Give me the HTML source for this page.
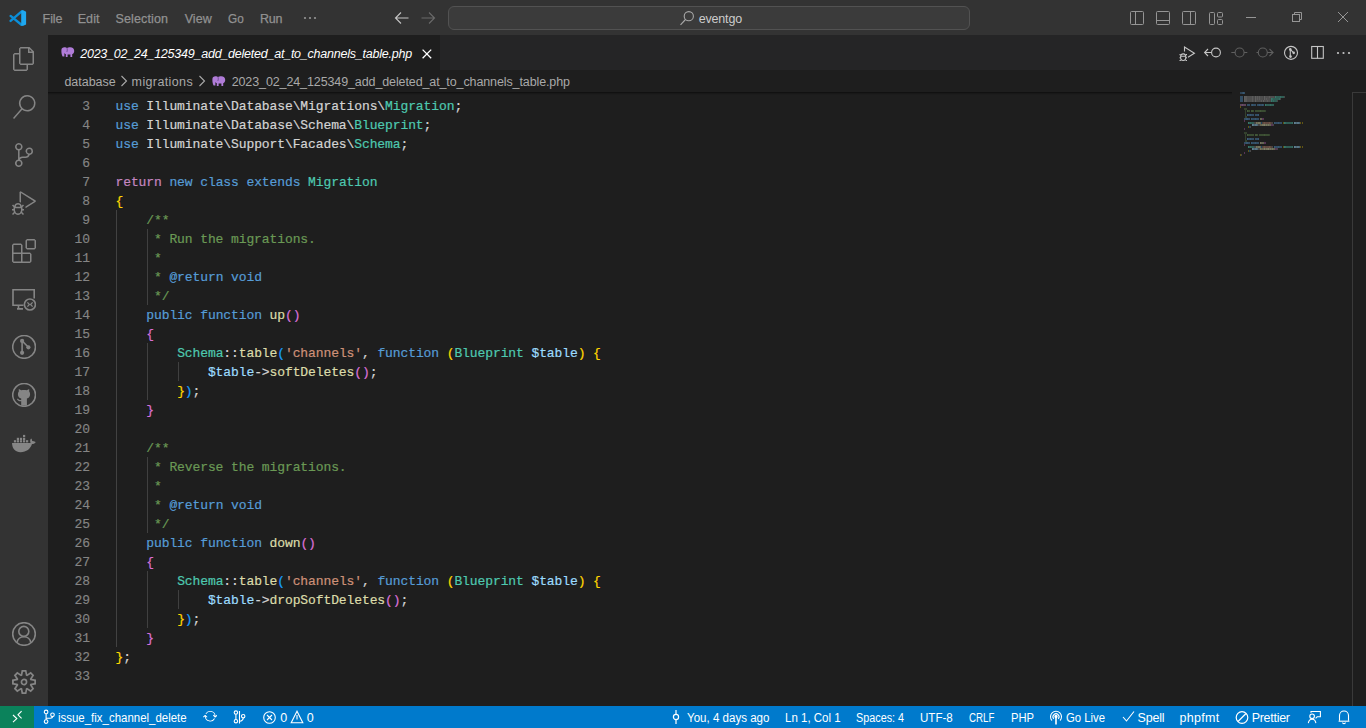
<!DOCTYPE html>
<html><head><meta charset="utf-8"><style>
*{margin:0;padding:0;box-sizing:border-box}
svg{display:block}
html,body{width:1366px;height:728px;overflow:hidden;background:#1e1e1e}
body{position:relative;font-family:"Liberation Sans",sans-serif}
.mi{position:absolute;top:11px;font-size:12.5px;line-height:16px;color:#9a9a9a;white-space:pre}
.si{position:absolute;top:709px;font-size:11.5px;line-height:16px;color:#ffffff;white-space:pre}
.ln{position:absolute;left:48px;width:42px;height:19px;line-height:19px;text-align:right;color:#858585;font-family:"Liberation Mono",monospace;font-size:13px;letter-spacing:-0.1px;-webkit-text-stroke:0.15px currentColor}
.cl{position:absolute;left:115.5px;height:19px;line-height:19px;white-space:pre;font-family:"Liberation Mono",monospace;font-size:13px;letter-spacing:-0.1px;color:#d4d4d4;-webkit-text-stroke:0.2px currentColor}
</style></head><body>
<div style="position:absolute;left:0;top:0;width:1366px;height:35px;background:#333333"></div>
<svg style="position:absolute;left:6px;top:6px" width="24" height="24" viewBox="0 0 24 24"><path d="M4.6 9.9L15.4 18.8M4.6 14.9L15.4 5.6" stroke="#0b8ed8" stroke-width="2.4" stroke-linecap="round"/><path d="M15.2 4.8L16.8 4L20.1 5.7V18.4L16.8 20.1L15.2 19.3Z" fill="#1fa8f0"/></svg>
<div style="position:absolute;left:42.60px;top:9px;font-size:12.5px;line-height:20px;color:#959595;white-space:pre;font-family:'Liberation Sans';letter-spacing:-0.100px;-webkit-text-stroke:0.25px #8a8a8a;">File</div>
<div style="position:absolute;left:77.70px;top:9px;font-size:12.5px;line-height:20px;color:#959595;white-space:pre;font-family:'Liberation Sans';letter-spacing:0.100px;-webkit-text-stroke:0.25px #8a8a8a;">Edit</div>
<div style="position:absolute;left:115.50px;top:9px;font-size:12.5px;line-height:20px;color:#959595;white-space:pre;font-family:'Liberation Sans';letter-spacing:0.137px;-webkit-text-stroke:0.25px #8a8a8a;">Selection</div>
<div style="position:absolute;left:184.70px;top:9px;font-size:12.5px;line-height:20px;color:#959595;white-space:pre;font-family:'Liberation Sans';letter-spacing:0.067px;-webkit-text-stroke:0.25px #8a8a8a;">View</div>
<div style="position:absolute;left:228.00px;top:9px;font-size:12.5px;line-height:20px;color:#959595;white-space:pre;font-family:'Liberation Sans';letter-spacing:0.000px;transform:scaleX(0.9412);transform-origin:0 0;-webkit-text-stroke:0.25px #8a8a8a;">Go</div>
<div style="position:absolute;left:260.00px;top:9px;font-size:12.5px;line-height:20px;color:#959595;white-space:pre;font-family:'Liberation Sans';letter-spacing:-0.300px;-webkit-text-stroke:0.25px #8a8a8a;">Run</div>
<svg style="position:absolute;left:302px;top:16px" width="16" height="4"><circle cx="3" cy="2" r="1.1" fill="#959595"/><circle cx="8" cy="2" r="1.1" fill="#959595"/><circle cx="13" cy="2" r="1.1" fill="#959595"/></svg>
<svg style="position:absolute;left:394px;top:11px" width="16" height="14" viewBox="0 0 16 14" fill="none" stroke="#c5c5c5" stroke-width="1.1"><path d="M1.5 7h13M7 1.5L1.5 7 7 12.5"/></svg>
<svg style="position:absolute;left:420px;top:11px" width="16" height="14" viewBox="0 0 16 14" fill="none" stroke="#6a6a6a" stroke-width="1.1"><path d="M1.5 7h13M9 1.5L14.5 7 9 12.5"/></svg>
<div style="position:absolute;left:448px;top:6px;width:522px;height:24px;border:1px solid #525252;border-radius:6px;background:#3b3b3b"></div>
<svg style="position:absolute;left:679px;top:10px" width="16" height="16" viewBox="0 0 16 16" fill="none" stroke="#a8a8a8" stroke-width="1.1"><circle cx="9.8" cy="6.2" r="4.6"/><path d="M6.5 9.5L1.5 14.8"/></svg>
<div style="position:absolute;left:698.80px;top:9px;font-size:12.5px;line-height:20px;color:#cccccc;white-space:pre;font-family:'Liberation Sans';letter-spacing:-0.200px;">eventgo</div>
<svg style="position:absolute;left:1129px;top:10px" width="100" height="16" fill="none" stroke="#959595" stroke-width="1"><rect x="1.5" y="1.5" width="13" height="13" rx="1"/><path d="M6.5 1.5v13"/><rect x="27.5" y="1.5" width="13" height="13" rx="1"/><path d="M27.5 10.5h13"/><rect x="53.5" y="1.5" width="13" height="13" rx="1"/><path d="M61.5 1.5v13"/><rect x="80.5" y="2.5" width="5" height="12" rx="1"/><rect x="88.5" y="2.5" width="5" height="4.5" rx="1"/><rect x="88.5" y="9.5" width="5" height="5" rx="1"/></svg>
<svg style="position:absolute;left:1244px;top:8px" width="110" height="18" fill="none" stroke="#959595" stroke-width="1"><path d="M2 9.5h10"/><rect x="48.5" y="6.5" width="7" height="7"/><path d="M50.5 6.5v-2h7v7h-2"/><path d="M94 4l10 10M104 4l-10 10"/></svg>
<div style="position:absolute;left:0;top:35px;width:48px;height:671px;background:#333333"></div>
<div style="position:absolute;left:12px;top:47px;width:24px;height:24px"><svg width="24" height="24" viewBox="0 0 24 24"><path fill="#858585" d="M17.5 0h-9L7 1.5V6H2.5L1 7.5v15.07L2.5 24h12.07L16 22.57V18h4.7l1.3-1.43V4.5L17.5 0zm0 2.12l2.38 2.38H17.5V2.12zm-3 20.38h-12v-15H7v9.07L8.5 18h6v4.5zm6-6h-12v-15H16V6h4.5v10.5z"/></svg></div>
<div style="position:absolute;left:12px;top:95px;width:24px;height:24px"><svg width="24" height="24" viewBox="0 0 24 24"><path fill="#858585" d="M15.25 0a8.25 8.25 0 0 0-6.18 13.72L1 22.88l1.12 1 8.05-9.12A8.251 8.251 0 1 0 15.25.01V0zm0 15a6.75 6.75 0 1 1 0-13.5 6.75 6.75 0 0 1 0 13.5z"/></svg></div>
<div style="position:absolute;left:12px;top:143px;width:24px;height:24px"><svg width="24" height="24" viewBox="0 0 24 24"><path fill="#858585" d="M21.007 8.222A3.738 3.738 0 0 0 15.045 5.2a3.737 3.737 0 0 0 1.156 6.583 2.988 2.988 0 0 1-2.668 1.67h-2.99a4.456 4.456 0 0 0-2.989 1.165V7.4a3.737 3.737 0 1 0-1.494 0v9.117a3.776 3.776 0 1 0 1.816.099 2.99 2.99 0 0 1 2.668-1.667h2.99a4.484 4.484 0 0 0 4.223-3.039 3.736 3.736 0 0 0 3.25-3.687zM4.565 3.738a2.242 2.242 0 1 1 4.484 0 2.242 2.242 0 0 1-4.484 0zm4.484 16.441a2.242 2.242 0 1 1-4.484 0 2.242 2.242 0 0 1 4.484 0zm8.221-9.715a2.242 2.242 0 1 1 0-4.485 2.242 2.242 0 0 1 0 4.485z"/></svg></div>
<div style="position:absolute;left:12px;top:191px;width:24px;height:24px"><svg width="24" height="24" viewBox="0 0 24 24"><path fill="#858585" fill-rule="evenodd" d="M10.94 13.5l-1.32 1.32a3.73 3.73 0 0 0-7.24 0L1.06 13.5 0 14.56l1.72 1.72-.22.22V18H0v1.5h1.5v.08c.077.489.214.966.41 1.42L0 22.94 1.06 24l1.650-1.65A4.308 4.308 0 0 0 6 24a4.31 4.31 0 0 0 3.29-1.65L10.94 24 12 22.94 10.09 21c.198-.464.336-.951.41-1.45v-.1H12V18h-1.5v-1.5l-.22-.22L12 14.560l-1.06-1.06zM6 13.5a2.25 2.25 0 0 1 2.25 2.25h-4.5A2.25 2.25 0 0 1 6 13.5zm3 6a3.33 3.33 0 0 1-3 3 3.33 3.33 0 0 1-3-3v-2.25h6v2.25zm14.76-9.9v1.26L13.5 17.37v-1.75l8.45-5.4L9 2v9.75a5.1 5.1 0 0 0-1.5-.91V.94L8.650.3l15.11 9.3z"/></svg></div>
<div style="position:absolute;left:12px;top:239px;width:24px;height:24px"><svg width="24" height="24" viewBox="0 0 24 24"><path fill="#858585" fill-rule="evenodd" d="M13.5 1.5L15 0h7.5L24 1.5V9l-1.5 1.5H15L13.5 9V1.5zm1.5 0V9h7.5V1.5H15zM0 15V6l1.5-1.5H9L10.5 6v7.5H18l1.5 1.5v7.5L18 24H1.5L0 22.5V15zm9-1.5V6H1.5v7.5H9zM9 15H1.5v7.5H9V15zm1.5 7.5H18V15h-7.5v7.5z"/></svg></div>
<div style="position:absolute;left:12px;top:287px;width:24px;height:24px"><svg width="24" height="24" viewBox="0 0 24 24" fill="none" stroke="#858585" stroke-width="1.6"><path d="M11.5 18.3H1V2.7h21.2V11.5"/><path d="M5 21.9h6M6.5 18.3v3"/><circle cx="17.9" cy="17.5" r="5.5"/><path d="M15.4 15.4l2 2.1-2 2.1M20.6 15.4l-2 2.1 2 2.1" stroke-width="1.3"/></svg></div>
<div style="position:absolute;left:12px;top:335px;width:24px;height:24px"><svg width="24" height="24" viewBox="0 0 24 24" fill="none" stroke="#858585" stroke-width="1.6"><circle cx="12.1" cy="11.9" r="11.4"/><path d="M10.1 5.9v11.9M10.1 5.9l6.3 6.4"/><circle cx="10.1" cy="5.9" r="2.1" fill="#858585" stroke="none"/><circle cx="16.4" cy="12.3" r="2.1" fill="#858585" stroke="none"/><circle cx="10.1" cy="17.8" r="2.1" fill="#858585" stroke="none"/></svg></div>
<div style="position:absolute;left:12px;top:383px;width:24px;height:24px"><svg width="24" height="24" viewBox="0 0 24 24"><circle cx="12.1" cy="11.9" r="11.4" fill="none" stroke="#858585" stroke-width="1.6"/><path fill="#858585" d="M9.2 22.5V18.2C7.6 18.4 6.5 17.8 5.8 17.2L4.9 16.3L5.8 15.6L6.8 16.4C7.6 17 8.3 17.1 9.2 16.9V15.6C7 15 5.9 13.5 5.9 11.2C5.9 10.2 6.2 9.3 6.8 8.6V5.9L9.3 7.2C10.1 7 11 6.9 12 6.9C13 6.9 13.9 7 14.7 7.2L17.2 5.9V8.6C17.8 9.3 18.1 10.2 18.1 11.2C18.1 13.5 17 15 14.9 15.6V22.5Z"/></svg></div>
<div style="position:absolute;left:12px;top:431px;width:24px;height:24px"><svg width="24" height="24" viewBox="0 0 24 24"><path fill="#858585" d="M0 12H18.6L18.2 10.5C18 9.3 18.4 8 19.2 7.4C19.9 8 20.3 9 20.1 9.9C21.2 9.9 22.3 10.2 23.7 10.9C23 12.2 21.7 13 20 13C18.4 17.8 14.5 21.2 8.5 21.2C3.5 21.2 0.2 18 0 12Z"/><rect x="1.9" y="9.2" width="2.2" height="2.2" fill="#858585"/><rect x="4.8" y="9.2" width="2.2" height="2.2" fill="#858585"/><rect x="7.9" y="9.2" width="2.2" height="2.2" fill="#858585"/><rect x="11" y="9.2" width="2.2" height="2.2" fill="#858585"/><rect x="14" y="9.2" width="2.2" height="2.2" fill="#858585"/><rect x="4.8" y="6.8" width="2.2" height="2.2" fill="#858585"/><rect x="7.9" y="6.8" width="2.2" height="2.2" fill="#858585"/><rect x="11" y="6.8" width="2.2" height="2.2" fill="#858585"/><rect x="11" y="3.9" width="2.2" height="2.2" fill="#858585"/></svg></div>
<div style="position:absolute;left:12px;top:622px;width:24px;height:24px"><svg width="24" height="24" viewBox="0 0 24 24" fill="none" stroke="#858585" stroke-width="1.6"><circle cx="12" cy="12" r="11.3"/><circle cx="11.8" cy="9.4" r="5"/><path d="M5 20.5C5.6 17.2 8.4 14.8 11.9 14.8C15.4 14.8 18.2 17.2 18.8 20.5"/></svg></div>
<div style="position:absolute;left:12px;top:670px;width:24px;height:24px"><svg width="24" height="24" viewBox="0 0 24 24"><path fill="#858585" fill-rule="evenodd" d="M19.85 8.75l4.15.83v4.84l-4.15.83 2.35 3.52-3.43 3.43-3.52-2.35-.83 4.15H9.58l-.83-4.15-3.52 2.35-3.43-3.43 2.350-3.52L0 14.42V9.58l4.15-.83L1.8 5.23 5.23 1.8l3.52 2.35L9.58 0h4.84l.83 4.15 3.52-2.35 3.43 3.43-2.35 3.52zm-1.57 5.07l4-.81v-2l-4-.81-.54-1.3 2.29-3.43-1.43-1.43-3.43 2.29-1.3-.54-.81-4h-2l-.81 4-1.3.54-3.43-2.29-1.43 1.43L6.38 8.9l-.54 1.3-4 .81v2l4 .81.54 1.3-2.29 3.43 1.43 1.43 3.43-2.29 1.3.54.81 4h2l.81-4 1.3-.54 3.43 2.29 1.43-1.43-2.29-3.43.54-1.3zm-8.186-4.672A3.430 3.430 0 0 1 12 8.57 3.44 3.44 0 0 1 15.43 12a3.43 3.43 0 1 1-5.336-2.852zm.956 4.274c.281.188.612.288.95.288A1.7 1.7 0 0 0 13.71 12a1.71 1.71 0 1 0-2.66 1.422z"/></svg></div>
<div style="position:absolute;left:48px;top:35px;width:1318px;height:35px;background:#252526"></div>
<div style="position:absolute;left:48px;top:35px;width:392px;height:35px;background:#1e1e1e"></div>
<div style="position:absolute;left:61px;top:47px"><svg style="display:block" width="14" height="11" viewBox="0 0 14 11"><path fill="#b07cd8" d="M0.4 3C0.4 1.2 1.8 0.2 3.4 0.2C4.6 0.2 5.5 0.6 6 1.1C6.7 0.5 7.8 0.3 9.2 0.3C11.8 0.3 13.2 1.9 13.2 4.1C13.2 5.7 12.5 6.7 11.2 7.2V9.9H9.4V7.6H6.6V9.9H4.8V7.2C4.2 7 3.7 6.5 3.4 6V9.6H1.6C1 8.2 0.4 6.5 0.4 4.5Z"/><path d="M6 1.1C6.4 2.2 6.4 3.8 5.8 5" stroke="#5a3f78" stroke-width="0.7" fill="none"/></svg></div>
<div style="position:absolute;left:80.20px;top:44px;font-size:12.5px;line-height:20px;color:#ffffff;white-space:pre;font-family:'Liberation Sans';letter-spacing:-0.230px;font-style:italic;">2023_02_24_125349_add_deleted_at_to_channels_table.php</div>
<svg style="position:absolute;left:421px;top:48px" width="12" height="12" fill="none" stroke="#ffffff" stroke-width="1.3"><path d="M1.6 1.6l8.6 8.6M10.2 1.6l-8.6 8.6"/></svg>
<svg style="position:absolute;left:1170px;top:40px" width="190" height="26" fill="none" stroke-width="1.1"><path d="M14.5 11.6V7L24.4 13.2 18 17.2" stroke="#c5c5c5"/><ellipse cx="13.2" cy="17.2" rx="2.6" ry="3.3" stroke="#c5c5c5"/><path d="M10.6 16.2h5.2M9.5 14.6h1.2M15.6 14.6h1.4M9.5 17.8h1.2M15.6 17.8h1.4M9.5 20.5h1.4M15.6 20.5h1.4" stroke="#c5c5c5"/><circle cx="46" cy="12.5" r="4.4" stroke="#c5c5c5"/><path d="M41.6 12.5h-7M38 9l-3.4 3.5L38 16" stroke="#c5c5c5"/><circle cx="69.6" cy="12.5" r="4.5" stroke="#5f5f5f"/><path d="M61.3 12.5h3.8M74.1 12.5h3.2" stroke="#5f5f5f"/><circle cx="92.8" cy="12.5" r="4.5" stroke="#5f5f5f"/><path d="M86.5 12.5h1.8M97.3 12.5h6M99.5 9l3.6 3.5-3.6 3.5" stroke="#5f5f5f"/><circle cx="121" cy="12.85" r="6.5" stroke="#c5c5c5"/><path d="M120.3 9.4v7.2M120.3 9.4l3.4 3.45" stroke="#c5c5c5"/><circle cx="120.3" cy="9.4" r="1.3" fill="#c5c5c5"/><circle cx="123.7" cy="12.85" r="1.3" fill="#c5c5c5"/><circle cx="120.5" cy="16.6" r="1.3" fill="#c5c5c5"/><rect x="141.7" y="6.5" width="11.6" height="11.8" stroke="#c5c5c5"/><path d="M147.5 6.5v11.8" stroke="#c5c5c5"/></svg>
<svg style="position:absolute;left:1336px;top:51px" width="16" height="4"><circle cx="2" cy="2" r="1.1" fill="#c5c5c5"/><circle cx="7.5" cy="2" r="1.1" fill="#c5c5c5"/><circle cx="13" cy="2" r="1.1" fill="#c5c5c5"/></svg>
<div style="position:absolute;left:64.40px;top:72px;font-size:12.5px;line-height:20px;color:#a9a9a9;white-space:pre;font-family:'Liberation Sans';letter-spacing:-0.014px;">database</div>
<svg style="position:absolute;left:120px;top:75px" width="8" height="12" fill="none" stroke="#a9a9a9" stroke-width="1.1"><path d="M1.5 1l5 5-5 5"/></svg>
<div style="position:absolute;left:131.60px;top:72px;font-size:12.5px;line-height:20px;color:#a9a9a9;white-space:pre;font-family:'Liberation Sans';letter-spacing:0.378px;">migrations</div>
<svg style="position:absolute;left:198px;top:75px" width="8" height="12" fill="none" stroke="#a9a9a9" stroke-width="1.1"><path d="M1.5 1l5 5-5 5"/></svg>
<div style="position:absolute;left:212px;top:76px"><svg style="display:block" width="14" height="11" viewBox="0 0 14 11"><path fill="#b07cd8" d="M0.4 3C0.4 1.2 1.8 0.2 3.4 0.2C4.6 0.2 5.5 0.6 6 1.1C6.7 0.5 7.8 0.3 9.2 0.3C11.8 0.3 13.2 1.9 13.2 4.1C13.2 5.7 12.5 6.7 11.2 7.2V9.9H9.4V7.6H6.6V9.9H4.8V7.2C4.2 7 3.7 6.5 3.4 6V9.6H1.6C1 8.2 0.4 6.5 0.4 4.5Z"/><path d="M6 1.1C6.4 2.2 6.4 3.8 5.8 5" stroke="#5a3f78" stroke-width="0.7" fill="none"/></svg></div>
<div style="position:absolute;left:231.70px;top:72px;font-size:12.5px;line-height:20px;color:#a9a9a9;white-space:pre;font-family:'Liberation Sans';letter-spacing:-0.109px;">2023_02_24_125349_add_deleted_at_to_channels_table.php</div>
<div style="position:absolute;left:48px;top:92px;width:1184px;height:1px;background:#111111"></div><div style="position:absolute;left:48px;top:93px;width:1184px;height:1px;background:#181818"></div><div style="position:absolute;left:48px;top:94px;width:1184px;height:1px;background:#1c1c1c"></div>
<div style="position:absolute;left:116px;top:210px;width:1px;height:437px;background:#424242"></div>
<div style="position:absolute;left:147px;top:229px;width:1px;height:76px;background:#404040"></div>
<div style="position:absolute;left:147px;top:343px;width:1px;height:57px;background:#404040"></div>
<div style="position:absolute;left:178px;top:362px;width:1px;height:19px;background:#404040"></div>
<div style="position:absolute;left:147px;top:457px;width:1px;height:76px;background:#404040"></div>
<div style="position:absolute;left:147px;top:571px;width:1px;height:57px;background:#404040"></div>
<div style="position:absolute;left:178px;top:590px;width:1px;height:19px;background:#404040"></div>
<div class="ln" style="top:97px">3</div>
<div class="ln" style="top:116px">4</div>
<div class="ln" style="top:135px">5</div>
<div class="ln" style="top:154px">6</div>
<div class="ln" style="top:173px">7</div>
<div class="ln" style="top:192px">8</div>
<div class="ln" style="top:211px">9</div>
<div class="ln" style="top:230px">10</div>
<div class="ln" style="top:249px">11</div>
<div class="ln" style="top:268px">12</div>
<div class="ln" style="top:287px">13</div>
<div class="ln" style="top:306px">14</div>
<div class="ln" style="top:325px">15</div>
<div class="ln" style="top:344px">16</div>
<div class="ln" style="top:363px">17</div>
<div class="ln" style="top:382px">18</div>
<div class="ln" style="top:401px">19</div>
<div class="ln" style="top:420px">20</div>
<div class="ln" style="top:439px">21</div>
<div class="ln" style="top:458px">22</div>
<div class="ln" style="top:477px">23</div>
<div class="ln" style="top:496px">24</div>
<div class="ln" style="top:515px">25</div>
<div class="ln" style="top:534px">26</div>
<div class="ln" style="top:553px">27</div>
<div class="ln" style="top:572px">28</div>
<div class="ln" style="top:591px">29</div>
<div class="ln" style="top:610px">30</div>
<div class="ln" style="top:629px">31</div>
<div class="ln" style="top:648px">32</div>
<div class="ln" style="top:667px">33</div>
<div class="cl" style="top:97px"><span style="color:#569cd6">use</span><span style="color:#d4d4d4"> Illuminate\Database\Migrations\</span><span style="color:#4ec9b0">Migration</span><span style="color:#d4d4d4">;</span></div>
<div class="cl" style="top:116px"><span style="color:#569cd6">use</span><span style="color:#d4d4d4"> Illuminate\Database\Schema\</span><span style="color:#4ec9b0">Blueprint</span><span style="color:#d4d4d4">;</span></div>
<div class="cl" style="top:135px"><span style="color:#569cd6">use</span><span style="color:#d4d4d4"> Illuminate\Support\Facades\</span><span style="color:#4ec9b0">Schema</span><span style="color:#d4d4d4">;</span></div>
<div class="cl" style="top:154px"></div>
<div class="cl" style="top:173px"><span style="color:#c586c0">return</span><span style="color:#d4d4d4"> </span><span style="color:#569cd6">new</span><span style="color:#d4d4d4"> </span><span style="color:#569cd6">class</span><span style="color:#d4d4d4"> </span><span style="color:#569cd6">extends</span><span style="color:#d4d4d4"> </span><span style="color:#4ec9b0">Migration</span></div>
<div class="cl" style="top:192px"><span style="color:#ffd700">{</span></div>
<div class="cl" style="top:211px"><span style="color:#6a9955">    /**</span></div>
<div class="cl" style="top:230px"><span style="color:#6a9955">     * Run the migrations.</span></div>
<div class="cl" style="top:249px"><span style="color:#6a9955">     *</span></div>
<div class="cl" style="top:268px"><span style="color:#6a9955">     * </span><span style="color:#569cd6">@return</span><span style="color:#6a9955"> </span><span style="color:#569cd6">void</span></div>
<div class="cl" style="top:287px"><span style="color:#6a9955">     */</span></div>
<div class="cl" style="top:306px"><span style="color:#d4d4d4">    </span><span style="color:#569cd6">public</span><span style="color:#d4d4d4"> </span><span style="color:#569cd6">function</span><span style="color:#d4d4d4"> </span><span style="color:#dcdcaa">up</span><span style="color:#da70d6">()</span></div>
<div class="cl" style="top:325px"><span style="color:#d4d4d4">    </span><span style="color:#da70d6">{</span></div>
<div class="cl" style="top:344px"><span style="color:#d4d4d4">        </span><span style="color:#4ec9b0">Schema</span><span style="color:#d4d4d4">::</span><span style="color:#dcdcaa">table</span><span style="color:#179fff">(</span><span style="color:#ce9178">&#x27;channels&#x27;</span><span style="color:#d4d4d4">, </span><span style="color:#569cd6">function</span><span style="color:#d4d4d4"> </span><span style="color:#ffd700">(</span><span style="color:#4ec9b0">Blueprint</span><span style="color:#d4d4d4"> </span><span style="color:#9cdcfe">$table</span><span style="color:#ffd700">)</span><span style="color:#d4d4d4"> </span><span style="color:#ffd700">{</span></div>
<div class="cl" style="top:363px"><span style="color:#d4d4d4">            </span><span style="color:#9cdcfe">$table</span><span style="color:#d4d4d4">-&gt;</span><span style="color:#dcdcaa">softDeletes</span><span style="color:#da70d6">()</span><span style="color:#d4d4d4">;</span></div>
<div class="cl" style="top:382px"><span style="color:#d4d4d4">        </span><span style="color:#ffd700">}</span><span style="color:#179fff">)</span><span style="color:#d4d4d4">;</span></div>
<div class="cl" style="top:401px"><span style="color:#d4d4d4">    </span><span style="color:#da70d6">}</span></div>
<div class="cl" style="top:420px"></div>
<div class="cl" style="top:439px"><span style="color:#6a9955">    /**</span></div>
<div class="cl" style="top:458px"><span style="color:#6a9955">     * Reverse the migrations.</span></div>
<div class="cl" style="top:477px"><span style="color:#6a9955">     *</span></div>
<div class="cl" style="top:496px"><span style="color:#6a9955">     * </span><span style="color:#569cd6">@return</span><span style="color:#6a9955"> </span><span style="color:#569cd6">void</span></div>
<div class="cl" style="top:515px"><span style="color:#6a9955">     */</span></div>
<div class="cl" style="top:534px"><span style="color:#d4d4d4">    </span><span style="color:#569cd6">public</span><span style="color:#d4d4d4"> </span><span style="color:#569cd6">function</span><span style="color:#d4d4d4"> </span><span style="color:#dcdcaa">down</span><span style="color:#da70d6">()</span></div>
<div class="cl" style="top:553px"><span style="color:#d4d4d4">    </span><span style="color:#da70d6">{</span></div>
<div class="cl" style="top:572px"><span style="color:#d4d4d4">        </span><span style="color:#4ec9b0">Schema</span><span style="color:#d4d4d4">::</span><span style="color:#dcdcaa">table</span><span style="color:#179fff">(</span><span style="color:#ce9178">&#x27;channels&#x27;</span><span style="color:#d4d4d4">, </span><span style="color:#569cd6">function</span><span style="color:#d4d4d4"> </span><span style="color:#ffd700">(</span><span style="color:#4ec9b0">Blueprint</span><span style="color:#d4d4d4"> </span><span style="color:#9cdcfe">$table</span><span style="color:#ffd700">)</span><span style="color:#d4d4d4"> </span><span style="color:#ffd700">{</span></div>
<div class="cl" style="top:591px"><span style="color:#d4d4d4">            </span><span style="color:#9cdcfe">$table</span><span style="color:#d4d4d4">-&gt;</span><span style="color:#dcdcaa">dropSoftDeletes</span><span style="color:#da70d6">()</span><span style="color:#d4d4d4">;</span></div>
<div class="cl" style="top:610px"><span style="color:#d4d4d4">        </span><span style="color:#ffd700">}</span><span style="color:#179fff">)</span><span style="color:#d4d4d4">;</span></div>
<div class="cl" style="top:629px"><span style="color:#d4d4d4">    </span><span style="color:#da70d6">}</span></div>
<div class="cl" style="top:648px"><span style="color:#ffd700">}</span><span style="color:#d4d4d4">;</span></div>
<div class="cl" style="top:667px"></div>
<div style="position:absolute;left:1240px;top:92px;width:2px;height:2px;background:#569cd6;opacity:0.30"></div>
<div style="position:absolute;left:1242px;top:92px;width:1px;height:2px;background:#569cd6;opacity:0.38"></div>
<div style="position:absolute;left:1243px;top:92px;width:1px;height:2px;background:#569cd6;opacity:0.46"></div>
<div style="position:absolute;left:1244px;top:92px;width:1px;height:2px;background:#569cd6;opacity:0.38"></div>
<div style="position:absolute;left:1240px;top:96px;width:3px;height:2px;background:#569cd6;opacity:0.38"></div>
<div style="position:absolute;left:1244px;top:96px;width:1px;height:2px;background:#d4d4d4;opacity:0.37"></div>
<div style="position:absolute;left:1245px;top:96px;width:2px;height:2px;background:#d4d4d4;opacity:0.33"></div>
<div style="position:absolute;left:1247px;top:96px;width:5px;height:2px;background:#d4d4d4;opacity:0.27"></div>
<div style="position:absolute;left:1252px;top:96px;width:1px;height:2px;background:#d4d4d4;opacity:0.33"></div>
<div style="position:absolute;left:1253px;top:96px;width:1px;height:2px;background:#d4d4d4;opacity:0.27"></div>
<div style="position:absolute;left:1254px;top:96px;width:1px;height:2px;background:#d4d4d4;opacity:0.22"></div>
<div style="position:absolute;left:1255px;top:96px;width:1px;height:2px;background:#d4d4d4;opacity:0.37"></div>
<div style="position:absolute;left:1256px;top:96px;width:1px;height:2px;background:#d4d4d4;opacity:0.27"></div>
<div style="position:absolute;left:1257px;top:96px;width:1px;height:2px;background:#d4d4d4;opacity:0.33"></div>
<div style="position:absolute;left:1258px;top:96px;width:1px;height:2px;background:#d4d4d4;opacity:0.27"></div>
<div style="position:absolute;left:1259px;top:96px;width:1px;height:2px;background:#d4d4d4;opacity:0.33"></div>
<div style="position:absolute;left:1260px;top:96px;width:3px;height:2px;background:#d4d4d4;opacity:0.27"></div>
<div style="position:absolute;left:1263px;top:96px;width:1px;height:2px;background:#d4d4d4;opacity:0.22"></div>
<div style="position:absolute;left:1264px;top:96px;width:1px;height:2px;background:#d4d4d4;opacity:0.37"></div>
<div style="position:absolute;left:1265px;top:96px;width:4px;height:2px;background:#d4d4d4;opacity:0.27"></div>
<div style="position:absolute;left:1269px;top:96px;width:1px;height:2px;background:#d4d4d4;opacity:0.33"></div>
<div style="position:absolute;left:1270px;top:96px;width:4px;height:2px;background:#d4d4d4;opacity:0.27"></div>
<div style="position:absolute;left:1274px;top:96px;width:1px;height:2px;background:#d4d4d4;opacity:0.22"></div>
<div style="position:absolute;left:1275px;top:96px;width:1px;height:2px;background:#4ec9b0;opacity:0.52"></div>
<div style="position:absolute;left:1276px;top:96px;width:4px;height:2px;background:#4ec9b0;opacity:0.38"></div>
<div style="position:absolute;left:1280px;top:96px;width:1px;height:2px;background:#4ec9b0;opacity:0.46"></div>
<div style="position:absolute;left:1281px;top:96px;width:3px;height:2px;background:#4ec9b0;opacity:0.38"></div>
<div style="position:absolute;left:1284px;top:96px;width:1px;height:2px;background:#d4d4d4;opacity:0.22"></div>
<div style="position:absolute;left:1240px;top:98px;width:3px;height:2px;background:#569cd6;opacity:0.38"></div>
<div style="position:absolute;left:1244px;top:98px;width:1px;height:2px;background:#d4d4d4;opacity:0.37"></div>
<div style="position:absolute;left:1245px;top:98px;width:2px;height:2px;background:#d4d4d4;opacity:0.33"></div>
<div style="position:absolute;left:1247px;top:98px;width:5px;height:2px;background:#d4d4d4;opacity:0.27"></div>
<div style="position:absolute;left:1252px;top:98px;width:1px;height:2px;background:#d4d4d4;opacity:0.33"></div>
<div style="position:absolute;left:1253px;top:98px;width:1px;height:2px;background:#d4d4d4;opacity:0.27"></div>
<div style="position:absolute;left:1254px;top:98px;width:1px;height:2px;background:#d4d4d4;opacity:0.22"></div>
<div style="position:absolute;left:1255px;top:98px;width:1px;height:2px;background:#d4d4d4;opacity:0.37"></div>
<div style="position:absolute;left:1256px;top:98px;width:1px;height:2px;background:#d4d4d4;opacity:0.27"></div>
<div style="position:absolute;left:1257px;top:98px;width:1px;height:2px;background:#d4d4d4;opacity:0.33"></div>
<div style="position:absolute;left:1258px;top:98px;width:1px;height:2px;background:#d4d4d4;opacity:0.27"></div>
<div style="position:absolute;left:1259px;top:98px;width:1px;height:2px;background:#d4d4d4;opacity:0.33"></div>
<div style="position:absolute;left:1260px;top:98px;width:3px;height:2px;background:#d4d4d4;opacity:0.27"></div>
<div style="position:absolute;left:1263px;top:98px;width:1px;height:2px;background:#d4d4d4;opacity:0.22"></div>
<div style="position:absolute;left:1264px;top:98px;width:1px;height:2px;background:#d4d4d4;opacity:0.37"></div>
<div style="position:absolute;left:1265px;top:98px;width:1px;height:2px;background:#d4d4d4;opacity:0.27"></div>
<div style="position:absolute;left:1266px;top:98px;width:1px;height:2px;background:#d4d4d4;opacity:0.33"></div>
<div style="position:absolute;left:1267px;top:98px;width:3px;height:2px;background:#d4d4d4;opacity:0.27"></div>
<div style="position:absolute;left:1270px;top:98px;width:1px;height:2px;background:#d4d4d4;opacity:0.22"></div>
<div style="position:absolute;left:1271px;top:98px;width:1px;height:2px;background:#4ec9b0;opacity:0.52"></div>
<div style="position:absolute;left:1272px;top:98px;width:1px;height:2px;background:#4ec9b0;opacity:0.46"></div>
<div style="position:absolute;left:1273px;top:98px;width:6px;height:2px;background:#4ec9b0;opacity:0.38"></div>
<div style="position:absolute;left:1279px;top:98px;width:1px;height:2px;background:#4ec9b0;opacity:0.46"></div>
<div style="position:absolute;left:1280px;top:98px;width:1px;height:2px;background:#d4d4d4;opacity:0.22"></div>
<div style="position:absolute;left:1240px;top:100px;width:3px;height:2px;background:#569cd6;opacity:0.38"></div>
<div style="position:absolute;left:1244px;top:100px;width:1px;height:2px;background:#d4d4d4;opacity:0.37"></div>
<div style="position:absolute;left:1245px;top:100px;width:2px;height:2px;background:#d4d4d4;opacity:0.33"></div>
<div style="position:absolute;left:1247px;top:100px;width:5px;height:2px;background:#d4d4d4;opacity:0.27"></div>
<div style="position:absolute;left:1252px;top:100px;width:1px;height:2px;background:#d4d4d4;opacity:0.33"></div>
<div style="position:absolute;left:1253px;top:100px;width:1px;height:2px;background:#d4d4d4;opacity:0.27"></div>
<div style="position:absolute;left:1254px;top:100px;width:1px;height:2px;background:#d4d4d4;opacity:0.22"></div>
<div style="position:absolute;left:1255px;top:100px;width:1px;height:2px;background:#d4d4d4;opacity:0.37"></div>
<div style="position:absolute;left:1256px;top:100px;width:5px;height:2px;background:#d4d4d4;opacity:0.27"></div>
<div style="position:absolute;left:1261px;top:100px;width:1px;height:2px;background:#d4d4d4;opacity:0.33"></div>
<div style="position:absolute;left:1262px;top:100px;width:1px;height:2px;background:#d4d4d4;opacity:0.22"></div>
<div style="position:absolute;left:1263px;top:100px;width:1px;height:2px;background:#d4d4d4;opacity:0.37"></div>
<div style="position:absolute;left:1264px;top:100px;width:3px;height:2px;background:#d4d4d4;opacity:0.27"></div>
<div style="position:absolute;left:1267px;top:100px;width:1px;height:2px;background:#d4d4d4;opacity:0.33"></div>
<div style="position:absolute;left:1268px;top:100px;width:2px;height:2px;background:#d4d4d4;opacity:0.27"></div>
<div style="position:absolute;left:1270px;top:100px;width:1px;height:2px;background:#d4d4d4;opacity:0.22"></div>
<div style="position:absolute;left:1271px;top:100px;width:1px;height:2px;background:#4ec9b0;opacity:0.52"></div>
<div style="position:absolute;left:1272px;top:100px;width:1px;height:2px;background:#4ec9b0;opacity:0.38"></div>
<div style="position:absolute;left:1273px;top:100px;width:1px;height:2px;background:#4ec9b0;opacity:0.46"></div>
<div style="position:absolute;left:1274px;top:100px;width:3px;height:2px;background:#4ec9b0;opacity:0.38"></div>
<div style="position:absolute;left:1277px;top:100px;width:1px;height:2px;background:#d4d4d4;opacity:0.22"></div>
<div style="position:absolute;left:1240px;top:104px;width:2px;height:2px;background:#c586c0;opacity:0.38"></div>
<div style="position:absolute;left:1242px;top:104px;width:1px;height:2px;background:#c586c0;opacity:0.46"></div>
<div style="position:absolute;left:1243px;top:104px;width:3px;height:2px;background:#c586c0;opacity:0.38"></div>
<div style="position:absolute;left:1247px;top:104px;width:3px;height:2px;background:#569cd6;opacity:0.38"></div>
<div style="position:absolute;left:1251px;top:104px;width:1px;height:2px;background:#569cd6;opacity:0.38"></div>
<div style="position:absolute;left:1252px;top:104px;width:1px;height:2px;background:#569cd6;opacity:0.46"></div>
<div style="position:absolute;left:1253px;top:104px;width:3px;height:2px;background:#569cd6;opacity:0.38"></div>
<div style="position:absolute;left:1257px;top:104px;width:2px;height:2px;background:#569cd6;opacity:0.38"></div>
<div style="position:absolute;left:1259px;top:104px;width:1px;height:2px;background:#569cd6;opacity:0.46"></div>
<div style="position:absolute;left:1260px;top:104px;width:2px;height:2px;background:#569cd6;opacity:0.38"></div>
<div style="position:absolute;left:1262px;top:104px;width:1px;height:2px;background:#569cd6;opacity:0.46"></div>
<div style="position:absolute;left:1263px;top:104px;width:1px;height:2px;background:#569cd6;opacity:0.38"></div>
<div style="position:absolute;left:1265px;top:104px;width:1px;height:2px;background:#4ec9b0;opacity:0.52"></div>
<div style="position:absolute;left:1266px;top:104px;width:4px;height:2px;background:#4ec9b0;opacity:0.38"></div>
<div style="position:absolute;left:1270px;top:104px;width:1px;height:2px;background:#4ec9b0;opacity:0.46"></div>
<div style="position:absolute;left:1271px;top:104px;width:3px;height:2px;background:#4ec9b0;opacity:0.38"></div>
<div style="position:absolute;left:1240px;top:106px;width:1px;height:2px;background:#ffd700;opacity:0.30"></div>
<div style="position:absolute;left:1244px;top:108px;width:3px;height:2px;background:#6a9955;opacity:0.30"></div>
<div style="position:absolute;left:1245px;top:110px;width:1px;height:2px;background:#6a9955;opacity:0.30"></div>
<div style="position:absolute;left:1247px;top:110px;width:1px;height:2px;background:#6a9955;opacity:0.52"></div>
<div style="position:absolute;left:1248px;top:110px;width:2px;height:2px;background:#6a9955;opacity:0.38"></div>
<div style="position:absolute;left:1251px;top:110px;width:2px;height:2px;background:#6a9955;opacity:0.46"></div>
<div style="position:absolute;left:1253px;top:110px;width:1px;height:2px;background:#6a9955;opacity:0.38"></div>
<div style="position:absolute;left:1255px;top:110px;width:5px;height:2px;background:#6a9955;opacity:0.38"></div>
<div style="position:absolute;left:1260px;top:110px;width:1px;height:2px;background:#6a9955;opacity:0.46"></div>
<div style="position:absolute;left:1261px;top:110px;width:4px;height:2px;background:#6a9955;opacity:0.38"></div>
<div style="position:absolute;left:1265px;top:110px;width:1px;height:2px;background:#6a9955;opacity:0.30"></div>
<div style="position:absolute;left:1245px;top:112px;width:1px;height:2px;background:#6a9955;opacity:0.30"></div>
<div style="position:absolute;left:1245px;top:114px;width:1px;height:2px;background:#6a9955;opacity:0.30"></div>
<div style="position:absolute;left:1247px;top:114px;width:1px;height:2px;background:#569cd6;opacity:0.52"></div>
<div style="position:absolute;left:1248px;top:114px;width:2px;height:2px;background:#569cd6;opacity:0.38"></div>
<div style="position:absolute;left:1250px;top:114px;width:1px;height:2px;background:#569cd6;opacity:0.46"></div>
<div style="position:absolute;left:1251px;top:114px;width:3px;height:2px;background:#569cd6;opacity:0.38"></div>
<div style="position:absolute;left:1255px;top:114px;width:3px;height:2px;background:#569cd6;opacity:0.38"></div>
<div style="position:absolute;left:1258px;top:114px;width:1px;height:2px;background:#569cd6;opacity:0.46"></div>
<div style="position:absolute;left:1245px;top:116px;width:2px;height:2px;background:#6a9955;opacity:0.30"></div>
<div style="position:absolute;left:1244px;top:118px;width:2px;height:2px;background:#569cd6;opacity:0.38"></div>
<div style="position:absolute;left:1246px;top:118px;width:2px;height:2px;background:#569cd6;opacity:0.46"></div>
<div style="position:absolute;left:1248px;top:118px;width:2px;height:2px;background:#569cd6;opacity:0.38"></div>
<div style="position:absolute;left:1251px;top:118px;width:1px;height:2px;background:#569cd6;opacity:0.46"></div>
<div style="position:absolute;left:1252px;top:118px;width:3px;height:2px;background:#569cd6;opacity:0.38"></div>
<div style="position:absolute;left:1255px;top:118px;width:1px;height:2px;background:#569cd6;opacity:0.46"></div>
<div style="position:absolute;left:1256px;top:118px;width:3px;height:2px;background:#569cd6;opacity:0.38"></div>
<div style="position:absolute;left:1260px;top:118px;width:2px;height:2px;background:#dcdcaa;opacity:0.38"></div>
<div style="position:absolute;left:1262px;top:118px;width:2px;height:2px;background:#da70d6;opacity:0.30"></div>
<div style="position:absolute;left:1244px;top:120px;width:1px;height:2px;background:#da70d6;opacity:0.30"></div>
<div style="position:absolute;left:1248px;top:122px;width:1px;height:2px;background:#4ec9b0;opacity:0.52"></div>
<div style="position:absolute;left:1249px;top:122px;width:1px;height:2px;background:#4ec9b0;opacity:0.38"></div>
<div style="position:absolute;left:1250px;top:122px;width:1px;height:2px;background:#4ec9b0;opacity:0.46"></div>
<div style="position:absolute;left:1251px;top:122px;width:3px;height:2px;background:#4ec9b0;opacity:0.38"></div>
<div style="position:absolute;left:1254px;top:122px;width:2px;height:2px;background:#d4d4d4;opacity:0.22"></div>
<div style="position:absolute;left:1256px;top:122px;width:1px;height:2px;background:#dcdcaa;opacity:0.46"></div>
<div style="position:absolute;left:1257px;top:122px;width:1px;height:2px;background:#dcdcaa;opacity:0.38"></div>
<div style="position:absolute;left:1258px;top:122px;width:2px;height:2px;background:#dcdcaa;opacity:0.46"></div>
<div style="position:absolute;left:1260px;top:122px;width:1px;height:2px;background:#dcdcaa;opacity:0.38"></div>
<div style="position:absolute;left:1261px;top:122px;width:1px;height:2px;background:#179fff;opacity:0.30"></div>
<div style="position:absolute;left:1262px;top:122px;width:1px;height:2px;background:#ce9178;opacity:0.30"></div>
<div style="position:absolute;left:1263px;top:122px;width:1px;height:2px;background:#ce9178;opacity:0.38"></div>
<div style="position:absolute;left:1264px;top:122px;width:1px;height:2px;background:#ce9178;opacity:0.46"></div>
<div style="position:absolute;left:1265px;top:122px;width:4px;height:2px;background:#ce9178;opacity:0.38"></div>
<div style="position:absolute;left:1269px;top:122px;width:1px;height:2px;background:#ce9178;opacity:0.46"></div>
<div style="position:absolute;left:1270px;top:122px;width:1px;height:2px;background:#ce9178;opacity:0.38"></div>
<div style="position:absolute;left:1271px;top:122px;width:1px;height:2px;background:#ce9178;opacity:0.30"></div>
<div style="position:absolute;left:1272px;top:122px;width:1px;height:2px;background:#d4d4d4;opacity:0.22"></div>
<div style="position:absolute;left:1274px;top:122px;width:1px;height:2px;background:#569cd6;opacity:0.46"></div>
<div style="position:absolute;left:1275px;top:122px;width:3px;height:2px;background:#569cd6;opacity:0.38"></div>
<div style="position:absolute;left:1278px;top:122px;width:1px;height:2px;background:#569cd6;opacity:0.46"></div>
<div style="position:absolute;left:1279px;top:122px;width:3px;height:2px;background:#569cd6;opacity:0.38"></div>
<div style="position:absolute;left:1283px;top:122px;width:1px;height:2px;background:#ffd700;opacity:0.30"></div>
<div style="position:absolute;left:1284px;top:122px;width:1px;height:2px;background:#4ec9b0;opacity:0.52"></div>
<div style="position:absolute;left:1285px;top:122px;width:1px;height:2px;background:#4ec9b0;opacity:0.46"></div>
<div style="position:absolute;left:1286px;top:122px;width:6px;height:2px;background:#4ec9b0;opacity:0.38"></div>
<div style="position:absolute;left:1292px;top:122px;width:1px;height:2px;background:#4ec9b0;opacity:0.46"></div>
<div style="position:absolute;left:1294px;top:122px;width:1px;height:2px;background:#9cdcfe;opacity:0.52"></div>
<div style="position:absolute;left:1295px;top:122px;width:1px;height:2px;background:#9cdcfe;opacity:0.46"></div>
<div style="position:absolute;left:1296px;top:122px;width:1px;height:2px;background:#9cdcfe;opacity:0.38"></div>
<div style="position:absolute;left:1297px;top:122px;width:2px;height:2px;background:#9cdcfe;opacity:0.46"></div>
<div style="position:absolute;left:1299px;top:122px;width:1px;height:2px;background:#9cdcfe;opacity:0.38"></div>
<div style="position:absolute;left:1300px;top:122px;width:1px;height:2px;background:#ffd700;opacity:0.30"></div>
<div style="position:absolute;left:1302px;top:122px;width:1px;height:2px;background:#ffd700;opacity:0.30"></div>
<div style="position:absolute;left:1252px;top:124px;width:1px;height:2px;background:#9cdcfe;opacity:0.52"></div>
<div style="position:absolute;left:1253px;top:124px;width:1px;height:2px;background:#9cdcfe;opacity:0.46"></div>
<div style="position:absolute;left:1254px;top:124px;width:1px;height:2px;background:#9cdcfe;opacity:0.38"></div>
<div style="position:absolute;left:1255px;top:124px;width:2px;height:2px;background:#9cdcfe;opacity:0.46"></div>
<div style="position:absolute;left:1257px;top:124px;width:1px;height:2px;background:#9cdcfe;opacity:0.38"></div>
<div style="position:absolute;left:1258px;top:124px;width:2px;height:2px;background:#d4d4d4;opacity:0.22"></div>
<div style="position:absolute;left:1260px;top:124px;width:2px;height:2px;background:#dcdcaa;opacity:0.38"></div>
<div style="position:absolute;left:1262px;top:124px;width:2px;height:2px;background:#dcdcaa;opacity:0.46"></div>
<div style="position:absolute;left:1264px;top:124px;width:1px;height:2px;background:#dcdcaa;opacity:0.52"></div>
<div style="position:absolute;left:1265px;top:124px;width:1px;height:2px;background:#dcdcaa;opacity:0.38"></div>
<div style="position:absolute;left:1266px;top:124px;width:1px;height:2px;background:#dcdcaa;opacity:0.46"></div>
<div style="position:absolute;left:1267px;top:124px;width:1px;height:2px;background:#dcdcaa;opacity:0.38"></div>
<div style="position:absolute;left:1268px;top:124px;width:1px;height:2px;background:#dcdcaa;opacity:0.46"></div>
<div style="position:absolute;left:1269px;top:124px;width:2px;height:2px;background:#dcdcaa;opacity:0.38"></div>
<div style="position:absolute;left:1271px;top:124px;width:2px;height:2px;background:#da70d6;opacity:0.30"></div>
<div style="position:absolute;left:1273px;top:124px;width:1px;height:2px;background:#d4d4d4;opacity:0.22"></div>
<div style="position:absolute;left:1248px;top:126px;width:1px;height:2px;background:#ffd700;opacity:0.30"></div>
<div style="position:absolute;left:1249px;top:126px;width:1px;height:2px;background:#179fff;opacity:0.30"></div>
<div style="position:absolute;left:1250px;top:126px;width:1px;height:2px;background:#d4d4d4;opacity:0.22"></div>
<div style="position:absolute;left:1244px;top:128px;width:1px;height:2px;background:#da70d6;opacity:0.30"></div>
<div style="position:absolute;left:1244px;top:132px;width:3px;height:2px;background:#6a9955;opacity:0.30"></div>
<div style="position:absolute;left:1245px;top:134px;width:1px;height:2px;background:#6a9955;opacity:0.30"></div>
<div style="position:absolute;left:1247px;top:134px;width:1px;height:2px;background:#6a9955;opacity:0.52"></div>
<div style="position:absolute;left:1248px;top:134px;width:6px;height:2px;background:#6a9955;opacity:0.38"></div>
<div style="position:absolute;left:1255px;top:134px;width:2px;height:2px;background:#6a9955;opacity:0.46"></div>
<div style="position:absolute;left:1257px;top:134px;width:1px;height:2px;background:#6a9955;opacity:0.38"></div>
<div style="position:absolute;left:1259px;top:134px;width:5px;height:2px;background:#6a9955;opacity:0.38"></div>
<div style="position:absolute;left:1264px;top:134px;width:1px;height:2px;background:#6a9955;opacity:0.46"></div>
<div style="position:absolute;left:1265px;top:134px;width:4px;height:2px;background:#6a9955;opacity:0.38"></div>
<div style="position:absolute;left:1269px;top:134px;width:1px;height:2px;background:#6a9955;opacity:0.30"></div>
<div style="position:absolute;left:1245px;top:136px;width:1px;height:2px;background:#6a9955;opacity:0.30"></div>
<div style="position:absolute;left:1245px;top:138px;width:1px;height:2px;background:#6a9955;opacity:0.30"></div>
<div style="position:absolute;left:1247px;top:138px;width:1px;height:2px;background:#569cd6;opacity:0.52"></div>
<div style="position:absolute;left:1248px;top:138px;width:2px;height:2px;background:#569cd6;opacity:0.38"></div>
<div style="position:absolute;left:1250px;top:138px;width:1px;height:2px;background:#569cd6;opacity:0.46"></div>
<div style="position:absolute;left:1251px;top:138px;width:3px;height:2px;background:#569cd6;opacity:0.38"></div>
<div style="position:absolute;left:1255px;top:138px;width:3px;height:2px;background:#569cd6;opacity:0.38"></div>
<div style="position:absolute;left:1258px;top:138px;width:1px;height:2px;background:#569cd6;opacity:0.46"></div>
<div style="position:absolute;left:1245px;top:140px;width:2px;height:2px;background:#6a9955;opacity:0.30"></div>
<div style="position:absolute;left:1244px;top:142px;width:2px;height:2px;background:#569cd6;opacity:0.38"></div>
<div style="position:absolute;left:1246px;top:142px;width:2px;height:2px;background:#569cd6;opacity:0.46"></div>
<div style="position:absolute;left:1248px;top:142px;width:2px;height:2px;background:#569cd6;opacity:0.38"></div>
<div style="position:absolute;left:1251px;top:142px;width:1px;height:2px;background:#569cd6;opacity:0.46"></div>
<div style="position:absolute;left:1252px;top:142px;width:3px;height:2px;background:#569cd6;opacity:0.38"></div>
<div style="position:absolute;left:1255px;top:142px;width:1px;height:2px;background:#569cd6;opacity:0.46"></div>
<div style="position:absolute;left:1256px;top:142px;width:3px;height:2px;background:#569cd6;opacity:0.38"></div>
<div style="position:absolute;left:1260px;top:142px;width:1px;height:2px;background:#dcdcaa;opacity:0.46"></div>
<div style="position:absolute;left:1261px;top:142px;width:3px;height:2px;background:#dcdcaa;opacity:0.38"></div>
<div style="position:absolute;left:1264px;top:142px;width:2px;height:2px;background:#da70d6;opacity:0.30"></div>
<div style="position:absolute;left:1244px;top:144px;width:1px;height:2px;background:#da70d6;opacity:0.30"></div>
<div style="position:absolute;left:1248px;top:146px;width:1px;height:2px;background:#4ec9b0;opacity:0.52"></div>
<div style="position:absolute;left:1249px;top:146px;width:1px;height:2px;background:#4ec9b0;opacity:0.38"></div>
<div style="position:absolute;left:1250px;top:146px;width:1px;height:2px;background:#4ec9b0;opacity:0.46"></div>
<div style="position:absolute;left:1251px;top:146px;width:3px;height:2px;background:#4ec9b0;opacity:0.38"></div>
<div style="position:absolute;left:1254px;top:146px;width:2px;height:2px;background:#d4d4d4;opacity:0.22"></div>
<div style="position:absolute;left:1256px;top:146px;width:1px;height:2px;background:#dcdcaa;opacity:0.46"></div>
<div style="position:absolute;left:1257px;top:146px;width:1px;height:2px;background:#dcdcaa;opacity:0.38"></div>
<div style="position:absolute;left:1258px;top:146px;width:2px;height:2px;background:#dcdcaa;opacity:0.46"></div>
<div style="position:absolute;left:1260px;top:146px;width:1px;height:2px;background:#dcdcaa;opacity:0.38"></div>
<div style="position:absolute;left:1261px;top:146px;width:1px;height:2px;background:#179fff;opacity:0.30"></div>
<div style="position:absolute;left:1262px;top:146px;width:1px;height:2px;background:#ce9178;opacity:0.30"></div>
<div style="position:absolute;left:1263px;top:146px;width:1px;height:2px;background:#ce9178;opacity:0.38"></div>
<div style="position:absolute;left:1264px;top:146px;width:1px;height:2px;background:#ce9178;opacity:0.46"></div>
<div style="position:absolute;left:1265px;top:146px;width:4px;height:2px;background:#ce9178;opacity:0.38"></div>
<div style="position:absolute;left:1269px;top:146px;width:1px;height:2px;background:#ce9178;opacity:0.46"></div>
<div style="position:absolute;left:1270px;top:146px;width:1px;height:2px;background:#ce9178;opacity:0.38"></div>
<div style="position:absolute;left:1271px;top:146px;width:1px;height:2px;background:#ce9178;opacity:0.30"></div>
<div style="position:absolute;left:1272px;top:146px;width:1px;height:2px;background:#d4d4d4;opacity:0.22"></div>
<div style="position:absolute;left:1274px;top:146px;width:1px;height:2px;background:#569cd6;opacity:0.46"></div>
<div style="position:absolute;left:1275px;top:146px;width:3px;height:2px;background:#569cd6;opacity:0.38"></div>
<div style="position:absolute;left:1278px;top:146px;width:1px;height:2px;background:#569cd6;opacity:0.46"></div>
<div style="position:absolute;left:1279px;top:146px;width:3px;height:2px;background:#569cd6;opacity:0.38"></div>
<div style="position:absolute;left:1283px;top:146px;width:1px;height:2px;background:#ffd700;opacity:0.30"></div>
<div style="position:absolute;left:1284px;top:146px;width:1px;height:2px;background:#4ec9b0;opacity:0.52"></div>
<div style="position:absolute;left:1285px;top:146px;width:1px;height:2px;background:#4ec9b0;opacity:0.46"></div>
<div style="position:absolute;left:1286px;top:146px;width:6px;height:2px;background:#4ec9b0;opacity:0.38"></div>
<div style="position:absolute;left:1292px;top:146px;width:1px;height:2px;background:#4ec9b0;opacity:0.46"></div>
<div style="position:absolute;left:1294px;top:146px;width:1px;height:2px;background:#9cdcfe;opacity:0.52"></div>
<div style="position:absolute;left:1295px;top:146px;width:1px;height:2px;background:#9cdcfe;opacity:0.46"></div>
<div style="position:absolute;left:1296px;top:146px;width:1px;height:2px;background:#9cdcfe;opacity:0.38"></div>
<div style="position:absolute;left:1297px;top:146px;width:2px;height:2px;background:#9cdcfe;opacity:0.46"></div>
<div style="position:absolute;left:1299px;top:146px;width:1px;height:2px;background:#9cdcfe;opacity:0.38"></div>
<div style="position:absolute;left:1300px;top:146px;width:1px;height:2px;background:#ffd700;opacity:0.30"></div>
<div style="position:absolute;left:1302px;top:146px;width:1px;height:2px;background:#ffd700;opacity:0.30"></div>
<div style="position:absolute;left:1252px;top:148px;width:1px;height:2px;background:#9cdcfe;opacity:0.52"></div>
<div style="position:absolute;left:1253px;top:148px;width:1px;height:2px;background:#9cdcfe;opacity:0.46"></div>
<div style="position:absolute;left:1254px;top:148px;width:1px;height:2px;background:#9cdcfe;opacity:0.38"></div>
<div style="position:absolute;left:1255px;top:148px;width:2px;height:2px;background:#9cdcfe;opacity:0.46"></div>
<div style="position:absolute;left:1257px;top:148px;width:1px;height:2px;background:#9cdcfe;opacity:0.38"></div>
<div style="position:absolute;left:1258px;top:148px;width:2px;height:2px;background:#d4d4d4;opacity:0.22"></div>
<div style="position:absolute;left:1260px;top:148px;width:1px;height:2px;background:#dcdcaa;opacity:0.46"></div>
<div style="position:absolute;left:1261px;top:148px;width:3px;height:2px;background:#dcdcaa;opacity:0.38"></div>
<div style="position:absolute;left:1264px;top:148px;width:1px;height:2px;background:#dcdcaa;opacity:0.52"></div>
<div style="position:absolute;left:1265px;top:148px;width:1px;height:2px;background:#dcdcaa;opacity:0.38"></div>
<div style="position:absolute;left:1266px;top:148px;width:2px;height:2px;background:#dcdcaa;opacity:0.46"></div>
<div style="position:absolute;left:1268px;top:148px;width:1px;height:2px;background:#dcdcaa;opacity:0.52"></div>
<div style="position:absolute;left:1269px;top:148px;width:1px;height:2px;background:#dcdcaa;opacity:0.38"></div>
<div style="position:absolute;left:1270px;top:148px;width:1px;height:2px;background:#dcdcaa;opacity:0.46"></div>
<div style="position:absolute;left:1271px;top:148px;width:1px;height:2px;background:#dcdcaa;opacity:0.38"></div>
<div style="position:absolute;left:1272px;top:148px;width:1px;height:2px;background:#dcdcaa;opacity:0.46"></div>
<div style="position:absolute;left:1273px;top:148px;width:2px;height:2px;background:#dcdcaa;opacity:0.38"></div>
<div style="position:absolute;left:1275px;top:148px;width:2px;height:2px;background:#da70d6;opacity:0.30"></div>
<div style="position:absolute;left:1277px;top:148px;width:1px;height:2px;background:#d4d4d4;opacity:0.22"></div>
<div style="position:absolute;left:1248px;top:150px;width:1px;height:2px;background:#ffd700;opacity:0.30"></div>
<div style="position:absolute;left:1249px;top:150px;width:1px;height:2px;background:#179fff;opacity:0.30"></div>
<div style="position:absolute;left:1250px;top:150px;width:1px;height:2px;background:#d4d4d4;opacity:0.22"></div>
<div style="position:absolute;left:1244px;top:152px;width:1px;height:2px;background:#da70d6;opacity:0.30"></div>
<div style="position:absolute;left:1240px;top:154px;width:1px;height:2px;background:#ffd700;opacity:0.30"></div>
<div style="position:absolute;left:1241px;top:154px;width:1px;height:2px;background:#d4d4d4;opacity:0.22"></div>
<div style="position:absolute;left:1352px;top:92px;width:1px;height:614px;background:#3a3a3a"></div><div style="position:absolute;left:1352px;top:92px;width:14px;height:1px;background:#3a3a3a"></div>
<div style="position:absolute;left:0;top:706px;width:1366px;height:22px;background:#007acc"></div>
<div style="position:absolute;left:0;top:706px;width:34px;height:22px;background:#0b825b"></div>
<svg style="position:absolute;left:11px;top:710px" width="13" height="14" fill="none" stroke="#ffffff" stroke-width="1.1"><path d="M2 5l3.8 3.6L2 12.2M10.6 1.2L7 4.8l3.6 3.6"/></svg>
<svg style="position:absolute;left:42px;top:709px" width="14" height="16" fill="none" stroke="#ffffff" stroke-width="1.1"><circle cx="4.1" cy="2.9" r="1.8"/><circle cx="4.1" cy="12.6" r="1.8"/><circle cx="10.5" cy="5.8" r="1.8"/><path d="M4.1 4.7v6.1M10.5 7.6c0 1.3-.6 1.7-2.2 1.7H4.1"/></svg>
<div style="position:absolute;left:58.38px;top:708px;font-size:12.5px;line-height:20px;color:#ffffff;white-space:pre;font-family:'Liberation Sans';letter-spacing:0.000px;transform:scaleX(0.9165);transform-origin:0 0;">issue_fix_channel_delete</div>
<svg style="position:absolute;left:202.8px;top:709.4px" width="14.4" height="14.4" viewBox="0 0 16 16"><path fill="#ffffff" d="M2.006 8.267L.78 9.5 0 8.73l2.09-2.07.76.01 2.09 2.12-.76.76-1.167-1.18a5 5 0 0 0 9.4 1.96l.9.44a6 6 0 0 1-11.24-2.5zm11.985-.52l1.232-1.240.78.77-2.09 2.07-.76-.01-2.09-2.12.76-.76 1.167 1.18a5 5 0 0 0-9.4-1.96l-.9-.44a6 6 0 0 1 11.24 2.5z"/></svg>
<svg style="position:absolute;left:233px;top:710px" width="14" height="15" fill="none" stroke="#ffffff" stroke-width="1.1"><circle cx="2.9" cy="2.6" r="1.7"/><circle cx="2.9" cy="11.2" r="1.7"/><circle cx="10.2" cy="6.2" r="1.7"/><path d="M2.9 4.3v5.2M6.5 1v12.5M10.2 7.9c0 2-1.3 3-3.7 3.4"/></svg>
<svg style="position:absolute;left:263px;top:711px" width="14" height="13" fill="none" stroke="#ffffff" stroke-width="1.1"><circle cx="6.5" cy="6.5" r="5.8"/><path d="M4 4l5 5M9 4l-5 5"/></svg>
<div style="position:absolute;left:280.20px;top:708px;font-size:12.5px;line-height:20px;color:#ffffff;white-space:pre;font-family:'Liberation Sans';letter-spacing:0.000px;">0</div>
<svg style="position:absolute;left:290px;top:710px" width="15" height="14" fill="none" stroke="#ffffff" stroke-width="1.1"><path d="M7 1.2L1.2 12.8h11.6z"/><path d="M7 5v4.5"/></svg>
<div style="position:absolute;left:306.80px;top:708px;font-size:12.5px;line-height:20px;color:#ffffff;white-space:pre;font-family:'Liberation Sans';letter-spacing:0.000px;">0</div>
<svg style="position:absolute;left:671px;top:709px" width="10" height="16" fill="none" stroke="#ffffff" stroke-width="1.2"><circle cx="5" cy="8" r="2.6"/><path d="M5 1v4.4M5 10.6V15"/></svg>
<div style="position:absolute;left:686.60px;top:708px;font-size:12.5px;line-height:20px;color:#ffffff;white-space:pre;font-family:'Liberation Sans';letter-spacing:0.000px;transform:scaleX(0.9247);transform-origin:0 0;">You, 4 days ago</div>
<div style="position:absolute;left:784.68px;top:708px;font-size:12.5px;line-height:20px;color:#ffffff;white-space:pre;font-family:'Liberation Sans';letter-spacing:0.000px;transform:scaleX(0.9203);transform-origin:0 0;">Ln 1, Col 1</div>
<div style="position:absolute;left:856.13px;top:708px;font-size:12.5px;line-height:20px;color:#ffffff;white-space:pre;font-family:'Liberation Sans';letter-spacing:0.000px;transform:scaleX(0.8655);transform-origin:0 0;">Spaces: 4</div>
<div style="position:absolute;left:920.47px;top:708px;font-size:12.5px;line-height:20px;color:#ffffff;white-space:pre;font-family:'Liberation Sans';letter-spacing:0.000px;transform:scaleX(0.9265);transform-origin:0 0;">UTF-8</div>
<div style="position:absolute;left:969.30px;top:708px;font-size:12.5px;line-height:20px;color:#ffffff;white-space:pre;font-family:'Liberation Sans';letter-spacing:0.000px;transform:scaleX(0.7788);transform-origin:0 0;">CRLF</div>
<div style="position:absolute;left:1010.50px;top:708px;font-size:12.5px;line-height:20px;color:#ffffff;white-space:pre;font-family:'Liberation Sans';letter-spacing:0.000px;transform:scaleX(0.8958);transform-origin:0 0;">PHP</div>
<div style="position:absolute;left:1066.30px;top:708px;font-size:12.5px;line-height:20px;color:#ffffff;white-space:pre;font-family:'Liberation Sans';letter-spacing:0.000px;transform:scaleX(0.9070);transform-origin:0 0;">Go Live</div>
<div style="position:absolute;left:1137.60px;top:708px;font-size:12.5px;line-height:20px;color:#ffffff;white-space:pre;font-family:'Liberation Sans';letter-spacing:-0.225px;">Spell</div>
<div style="position:absolute;left:1179.40px;top:708px;font-size:12.5px;line-height:20px;color:#ffffff;white-space:pre;font-family:'Liberation Sans';letter-spacing:0.320px;">phpfmt</div>
<div style="position:absolute;left:1251.70px;top:708px;font-size:12.5px;line-height:20px;color:#ffffff;white-space:pre;font-family:'Liberation Sans';letter-spacing:-0.286px;">Prettier</div>
<svg style="position:absolute;left:1049px;top:710px" width="14" height="15" fill="none" stroke="#ffffff" stroke-width="1.1"><path d="M3 10.5a5.5 5.5 0 1 1 8 0M4.8 8.8a3 3 0 1 1 4.4 0"/><circle cx="7" cy="6.5" r="1.1" fill="#ffffff"/><path d="M7 7.5v7" stroke-width="1.6"/></svg>
<svg style="position:absolute;left:1122px;top:710px" width="13" height="13" fill="none" stroke="#ffffff" stroke-width="1.1"><path d="M1 7l3.5 4L12 1.5"/></svg>
<svg style="position:absolute;left:1235px;top:710px" width="15" height="15" fill="none" stroke="#ffffff" stroke-width="1.2"><circle cx="7" cy="7.5" r="5.8"/><path d="M3 11.5l8-8"/></svg>
<svg style="position:absolute;left:1306px;top:709px" width="16" height="16" fill="none" stroke="#ffffff" stroke-width="1.1"><circle cx="6.1" cy="7.3" r="2.3"/><path d="M2.3 14.2c.4-2.4 1.8-3.9 3.8-3.9s3.4 1.5 3.8 3.9"/><path d="M5 3.8V2.5h9.4v5.3h-3.2l-1.6 1.5"/></svg>
<svg style="position:absolute;left:1337px;top:709px" width="14" height="16" fill="none" stroke="#ffffff" stroke-width="1.1"><path d="M2.5 11.8V6.5a4.5 4.5 0 0 1 9 0v5.3"/><path d="M1.6 12.2h10.8"/><path d="M5.6 13.4a1.4 1.2 0 0 0 2.8 0"/></svg>
</body></html>
